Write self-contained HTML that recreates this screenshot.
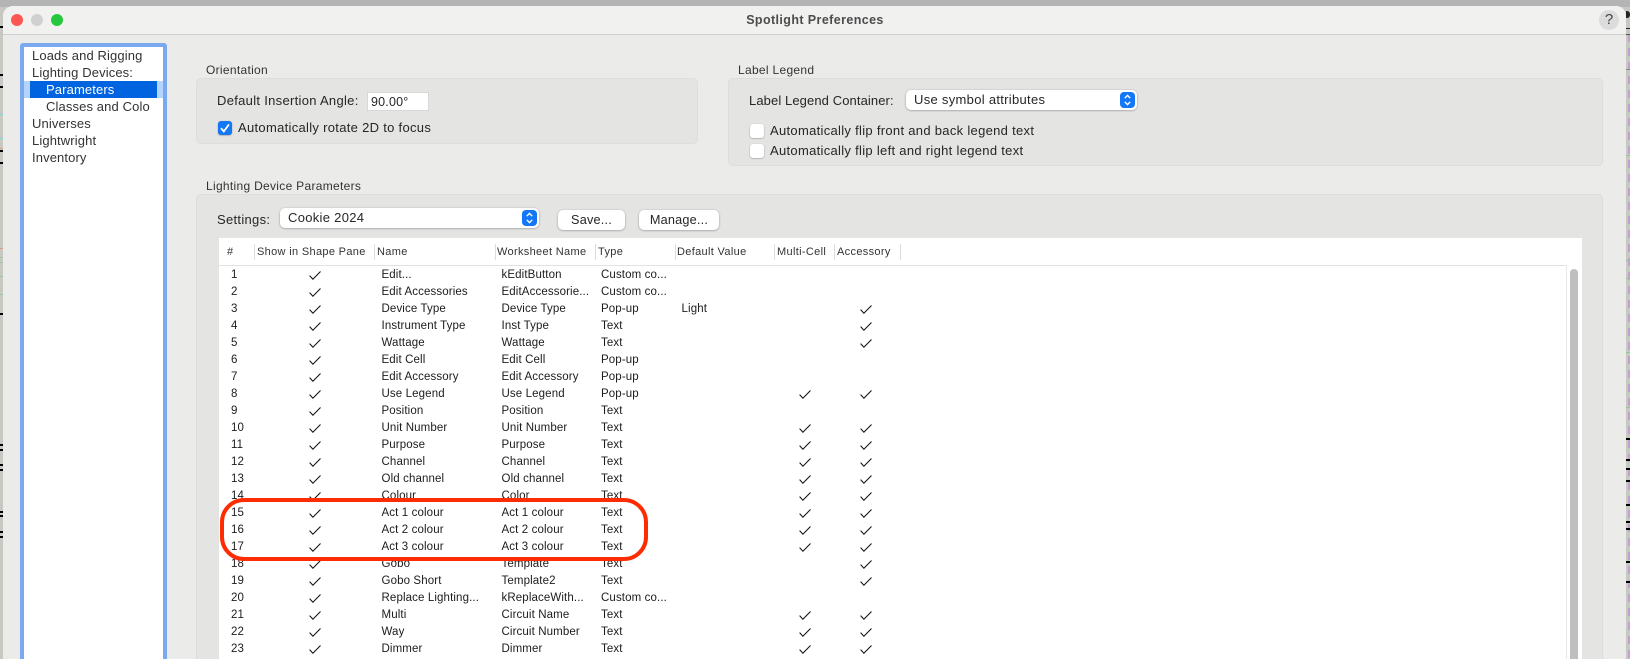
<!DOCTYPE html>
<html><head><meta charset="utf-8"><title>Spotlight Preferences</title>
<style>
html,body{margin:0;padding:0;background:#c8c8c3}
#p{position:relative;width:1630px;height:659px;overflow:hidden;font-family:"Liberation Sans",sans-serif;color:#1f1f1f;background:#c8c8c3;font-size:12px;filter:blur(.3px)}
#p div,#p span,#p svg{position:absolute;white-space:nowrap}
.top{left:0;top:0;width:1630px;height:7px;background:#b4b4b4}
.win{left:3px;top:6px;width:1623px;height:660px;background:#ebebea;border-radius:10px 10px 0 0;overflow:hidden}
.tb{left:3px;top:6px;width:1623px;height:28px;background:#f1f1f0;border-bottom:1px solid #cfcfcf;border-radius:10px 10px 0 0}
.tl{width:12px;height:12px;border-radius:50%;top:14px}
.side{left:20px;top:43px;width:139px;height:630px;border:4px solid #7aa9f0;border-radius:3px;background:#fff}
.si{font-size:13px;line-height:17px;height:17px;color:#333;letter-spacing:.12px}
.box{background:#e4e4e3;border:1px solid #dddddc;border-radius:5px;box-sizing:border-box}
.lb{font-size:12px;line-height:16px;color:#333;letter-spacing:.3px}
.tx{font-size:13px;line-height:16px;color:#262626;letter-spacing:.3px}
.pop{background:#fff;border-radius:5px;box-shadow:0 .5px 2px rgba(0,0,0,.35);height:20px}
.st{background:#1477f5;border-radius:4px;width:15px;height:16px}
.btn{background:#fff;border-radius:5px;box-shadow:0 .5px 2px rgba(0,0,0,.35);height:20px;text-align:center;line-height:20px;font-size:12.7px;letter-spacing:.2px;color:#262626}
.cb{width:14px;height:14px;border-radius:3px;background:#fff;box-shadow:0 .5px 1.5px rgba(0,0,0,.35)}
.tbl{left:219px;top:238px;width:1363px;height:430px;background:#fff}
.h{top:244px;font-size:11px;line-height:16px;color:#333;letter-spacing:.33px}
.sp{top:244px;width:1px;height:16px;background:#dcdcdc}
.r{left:0;width:1630px;height:17px;line-height:17px;font-size:11.5px;color:#1c1c1c;letter-spacing:.12px}
.r span{top:1px}
.a{left:231px}.b{left:381.5px}.c{left:501.5px}.d{left:601px}.e{left:681.5px}
.k{width:12px;height:9px;top:5px}
.k1{left:309px}.k2{left:799px}.k3{left:859.5px}
.mk{background:#000;height:1.5px;left:0;width:3px}
.mr{background:#000;height:1.5px;left:1626px;width:4px}
</style></head><body><div id="p">
<svg width="0" height="0" style="left:0;top:0"><defs><symbol id="ck" viewBox="0 0 12 9"><path d="M.6 4.6 L3.9 8.2 L11.5 .5" fill="none" stroke="#111" stroke-width="1.05"/></symbol></defs></svg>
<div class="top"></div>
<div style="left:1628px;top:34px;width:1.5px;height:625px;background:repeating-linear-gradient(180deg,#c49fd0 0 8px,#c8c8c3 8px 14px)"></div>
<div style="left:1626px;top:11px;width:4px;height:7px;background:#222;border-radius:0 3px 3px 0"></div>
<div style="left:1626px;top:28px;width:4px;height:1px;background:#222"></div>
<div style="left:1626px;top:34px;width:4px;height:1px;background:#555"></div>
<div style="left:1626px;top:69px;width:4px;height:1px;background:#888"></div>
<div style="left:1626px;top:155px;width:4px;height:1px;background:#8fc98f"></div>
<div style="left:1626px;top:260px;width:4px;height:1px;background:#8fc98f"></div>
<div style="left:1626px;top:278px;width:4px;height:1px;background:#8fc98f"></div>
<div style="left:1626px;top:352px;width:4px;height:1px;background:#8fc98f"></div>
<div style="left:1626px;top:407px;width:4px;height:1px;background:#8fc98f"></div>
<div class="mr" style="top:438px"></div><div class="mr" style="top:459px"></div><div class="mr" style="top:468px"></div><div class="mr" style="top:480px"></div><div class="mr" style="top:504px"></div><div class="mr" style="top:521px"></div><div class="mr" style="top:528px"></div><div class="mr" style="top:561px"></div><div class="mr" style="top:581px"></div>
<div class="mk" style="top:26px"></div><div class="mk" style="top:74px"></div><div class="mk" style="top:86px"></div>
<div style="left:0;top:114px;width:3px;height:1px;background:#7fd5e0"></div><div style="left:0;top:138px;width:3px;height:1px;background:#7fd5e0"></div><div style="left:0;top:148px;width:3px;height:1px;background:#e09a8a"></div>
<div class="mk" style="top:150px"></div><div class="mk" style="top:162px"></div>
<div style="left:0;top:248px;width:3px;height:1px;background:#e09a8a"></div><div style="left:0;top:257px;width:3px;height:1px;background:#9fc79f"></div><div style="left:0;top:262px;width:3px;height:1px;background:#9fc79f"></div><div style="left:0;top:276px;width:3px;height:1px;background:#9fc79f"></div><div style="left:0;top:294px;width:3px;height:1px;background:#9fc79f"></div>
<div class="mk" style="top:313px"></div>
<div class="mk" style="top:444px"></div><div class="mk" style="top:449px"></div><div class="mk" style="top:464px"></div><div class="mk" style="top:469px"></div><div class="mk" style="top:511px"></div><div class="mk" style="top:515px"></div><div class="mk" style="top:531px"></div><div class="mk" style="top:536px"></div>

<div class="win"></div>
<div class="tb"></div>
<div class="tl" style="left:11px;background:#fc5753"></div>
<div class="tl" style="left:31px;background:#d0d0d0"></div>
<div class="tl" style="left:51px;background:#27c83f"></div>
<div style="left:615px;width:400px;top:12px;text-align:center;font-size:12.5px;font-weight:bold;line-height:16px;color:#4c4c4c;letter-spacing:.4px">Spotlight Preferences</div>
<div style="left:1599px;top:10px;width:20px;height:20px;border-radius:50%;background:#dcdcdc;text-align:center;font-size:15px;line-height:20px;color:#444">?</div>

<div class="side"></div>
<div style="left:24px;top:81px;width:139px;height:17px;background:#b3d4fb"></div>
<div style="left:30px;top:81px;width:127px;height:17px;background:#0064e0"></div>
<div class="si" style="left:32px;top:47px">Loads and Rigging</div>
<div class="si" style="left:32px;top:64px">Lighting Devices:</div>
<div class="si" style="left:46px;top:81px;color:#fff">Parameters</div>
<div class="si" style="left:46px;top:98px">Classes and Colo</div>
<div class="si" style="left:32px;top:115px">Universes</div>
<div class="si" style="left:32px;top:132px">Lightwright</div>
<div class="si" style="left:32px;top:149px">Inventory</div>

<div class="lb" style="left:206px;top:62px">Orientation</div>
<div class="box" style="left:196px;top:78px;width:502px;height:66px"></div>
<div class="tx" style="left:217px;top:93px">Default Insertion Angle:</div>
<div style="left:367px;top:92px;width:62px;height:19px;background:#fff;border:1px solid #d8d8d8;box-sizing:border-box"></div>
<div class="tx" style="left:371px;top:94px;font-size:12.5px;letter-spacing:.2px">90.00°</div>
<div class="cb" style="left:218px;top:121px;background:#1477f5"></div>
<svg style="left:220px;top:123px" width="10" height="10" viewBox="0 0 10 10"><path d="M1 5.2 L3.8 8.4 L9 1.4" fill="none" stroke="#fff" stroke-width="1.8"/></svg>
<div class="tx" style="left:238px;top:120px">Automatically rotate 2D to focus</div>

<div class="lb" style="left:738px;top:62px">Label Legend</div>
<div class="box" style="left:728px;top:78px;width:875px;height:88px"></div>
<div class="tx" style="left:749px;top:93px;letter-spacing:.1px">Label Legend Container:</div>
<div class="pop" style="left:906px;top:90px;width:231px"></div>
<div class="tx" style="left:914px;top:92px">Use symbol attributes</div>
<div class="st" style="left:1120px;top:92px"></div>
<svg style="left:1120px;top:92px" width="15" height="16" viewBox="0 0 15 16"><path d="M4.8 6.2 L7.5 3.4 L10.2 6.2 M4.8 9.8 L7.5 12.6 L10.2 9.8" fill="none" stroke="#fff" stroke-width="1.4"/></svg>
<div class="cb" style="left:750px;top:124px"></div>
<div class="tx" style="left:770px;top:123px">Automatically flip front and back legend text</div>
<div class="cb" style="left:750px;top:144px"></div>
<div class="tx" style="left:770px;top:143px">Automatically flip left and right legend text</div>

<div class="lb" style="left:206px;top:178px">Lighting Device Parameters</div>
<div class="box" style="left:196px;top:194px;width:1407px;height:480px"></div>
<div class="tx" style="left:217px;top:212px">Settings:</div>
<div class="pop" style="left:280px;top:208px;width:259px"></div>
<div class="tx" style="left:288px;top:210px">Cookie 2024</div>
<div class="st" style="left:522px;top:210px"></div>
<svg style="left:522px;top:210px" width="15" height="16" viewBox="0 0 15 16"><path d="M4.8 6.2 L7.5 3.4 L10.2 6.2 M4.8 9.8 L7.5 12.6 L10.2 9.8" fill="none" stroke="#fff" stroke-width="1.4"/></svg>
<div class="btn" style="left:558px;top:210px;width:67px">Save...</div>
<div class="btn" style="left:639px;top:210px;width:80px">Manage...</div>

<div class="tbl"></div>
<div style="left:219px;top:265px;width:1347px;height:1px;background:#e2e2e2"></div>
<div style="left:1566px;top:265px;width:1px;height:394px;background:#e8e8e8"></div>
<div style="left:1570px;top:269px;width:8px;height:400px;background:#bfbfbf;border-radius:4px"></div>
<div class="h" style="left:227px">#</div><div class="sp" style="left:254px"></div>
<div class="h" style="left:257px">Show in Shape Pane</div><div class="sp" style="left:374px"></div>
<div class="h" style="left:377px">Name</div><div class="sp" style="left:495px"></div>
<div class="h" style="left:497px">Worksheet Name</div><div class="sp" style="left:595px"></div>
<div class="h" style="left:598px">Type</div><div class="sp" style="left:675px"></div>
<div class="h" style="left:677px">Default Value</div><div class="sp" style="left:774px"></div>
<div class="h" style="left:777px">Multi-Cell</div><div class="sp" style="left:834px"></div>
<div class="h" style="left:837px">Accessory</div><div class="sp" style="left:900px"></div>

<div class="r" style="top:266px"><span class="a">1</span><svg class="k k1"><use href="#ck"/></svg><span class="b">Edit...</span><span class="c">kEditButton</span><span class="d">Custom co...</span></div>
<div class="r" style="top:283px"><span class="a">2</span><svg class="k k1"><use href="#ck"/></svg><span class="b">Edit Accessories</span><span class="c">EditAccessorie...</span><span class="d">Custom co...</span></div>
<div class="r" style="top:300px"><span class="a">3</span><svg class="k k1"><use href="#ck"/></svg><span class="b">Device Type</span><span class="c">Device Type</span><span class="d">Pop-up</span><span class="e">Light</span><svg class="k k3"><use href="#ck"/></svg></div>
<div class="r" style="top:317px"><span class="a">4</span><svg class="k k1"><use href="#ck"/></svg><span class="b">Instrument Type</span><span class="c">Inst Type</span><span class="d">Text</span><svg class="k k3"><use href="#ck"/></svg></div>
<div class="r" style="top:334px"><span class="a">5</span><svg class="k k1"><use href="#ck"/></svg><span class="b">Wattage</span><span class="c">Wattage</span><span class="d">Text</span><svg class="k k3"><use href="#ck"/></svg></div>
<div class="r" style="top:351px"><span class="a">6</span><svg class="k k1"><use href="#ck"/></svg><span class="b">Edit Cell</span><span class="c">Edit Cell</span><span class="d">Pop-up</span></div>
<div class="r" style="top:368px"><span class="a">7</span><svg class="k k1"><use href="#ck"/></svg><span class="b">Edit Accessory</span><span class="c">Edit Accessory</span><span class="d">Pop-up</span></div>
<div class="r" style="top:385px"><span class="a">8</span><svg class="k k1"><use href="#ck"/></svg><span class="b">Use Legend</span><span class="c">Use Legend</span><span class="d">Pop-up</span><svg class="k k2"><use href="#ck"/></svg><svg class="k k3"><use href="#ck"/></svg></div>
<div class="r" style="top:402px"><span class="a">9</span><svg class="k k1"><use href="#ck"/></svg><span class="b">Position</span><span class="c">Position</span><span class="d">Text</span></div>
<div class="r" style="top:419px"><span class="a">10</span><svg class="k k1"><use href="#ck"/></svg><span class="b">Unit Number</span><span class="c">Unit Number</span><span class="d">Text</span><svg class="k k2"><use href="#ck"/></svg><svg class="k k3"><use href="#ck"/></svg></div>
<div class="r" style="top:436px"><span class="a">11</span><svg class="k k1"><use href="#ck"/></svg><span class="b">Purpose</span><span class="c">Purpose</span><span class="d">Text</span><svg class="k k2"><use href="#ck"/></svg><svg class="k k3"><use href="#ck"/></svg></div>
<div class="r" style="top:453px"><span class="a">12</span><svg class="k k1"><use href="#ck"/></svg><span class="b">Channel</span><span class="c">Channel</span><span class="d">Text</span><svg class="k k2"><use href="#ck"/></svg><svg class="k k3"><use href="#ck"/></svg></div>
<div class="r" style="top:470px"><span class="a">13</span><svg class="k k1"><use href="#ck"/></svg><span class="b">Old channel</span><span class="c">Old channel</span><span class="d">Text</span><svg class="k k2"><use href="#ck"/></svg><svg class="k k3"><use href="#ck"/></svg></div>
<div class="r" style="top:487px"><span class="a">14</span><svg class="k k1"><use href="#ck"/></svg><span class="b">Colour</span><span class="c">Color</span><span class="d">Text</span><svg class="k k2"><use href="#ck"/></svg><svg class="k k3"><use href="#ck"/></svg></div>
<div class="r" style="top:504px"><span class="a">15</span><svg class="k k1"><use href="#ck"/></svg><span class="b">Act 1 colour</span><span class="c">Act 1 colour</span><span class="d">Text</span><svg class="k k2"><use href="#ck"/></svg><svg class="k k3"><use href="#ck"/></svg></div>
<div class="r" style="top:521px"><span class="a">16</span><svg class="k k1"><use href="#ck"/></svg><span class="b">Act 2 colour</span><span class="c">Act 2 colour</span><span class="d">Text</span><svg class="k k2"><use href="#ck"/></svg><svg class="k k3"><use href="#ck"/></svg></div>
<div class="r" style="top:538px"><span class="a">17</span><svg class="k k1"><use href="#ck"/></svg><span class="b">Act 3 colour</span><span class="c">Act 3 colour</span><span class="d">Text</span><svg class="k k2"><use href="#ck"/></svg><svg class="k k3"><use href="#ck"/></svg></div>
<div class="r" style="top:555px"><span class="a">18</span><svg class="k k1"><use href="#ck"/></svg><span class="b">Gobo</span><span class="c">Template</span><span class="d">Text</span><svg class="k k3"><use href="#ck"/></svg></div>
<div class="r" style="top:572px"><span class="a">19</span><svg class="k k1"><use href="#ck"/></svg><span class="b">Gobo Short</span><span class="c">Template2</span><span class="d">Text</span><svg class="k k3"><use href="#ck"/></svg></div>
<div class="r" style="top:589px"><span class="a">20</span><svg class="k k1"><use href="#ck"/></svg><span class="b">Replace Lighting...</span><span class="c">kReplaceWith...</span><span class="d">Custom co...</span></div>
<div class="r" style="top:606px"><span class="a">21</span><svg class="k k1"><use href="#ck"/></svg><span class="b">Multi</span><span class="c">Circuit Name</span><span class="d">Text</span><svg class="k k2"><use href="#ck"/></svg><svg class="k k3"><use href="#ck"/></svg></div>
<div class="r" style="top:623px"><span class="a">22</span><svg class="k k1"><use href="#ck"/></svg><span class="b">Way</span><span class="c">Circuit Number</span><span class="d">Text</span><svg class="k k2"><use href="#ck"/></svg><svg class="k k3"><use href="#ck"/></svg></div>
<div class="r" style="top:640px"><span class="a">23</span><svg class="k k1"><use href="#ck"/></svg><span class="b">Dimmer</span><span class="c">Dimmer</span><span class="d">Text</span><svg class="k k2"><use href="#ck"/></svg><svg class="k k3"><use href="#ck"/></svg></div>

<div style="left:220px;top:497.5px;width:428px;height:63.5px;box-sizing:border-box;border:4.5px solid #fe2c02;border-radius:24px"></div>
</div></body></html>
